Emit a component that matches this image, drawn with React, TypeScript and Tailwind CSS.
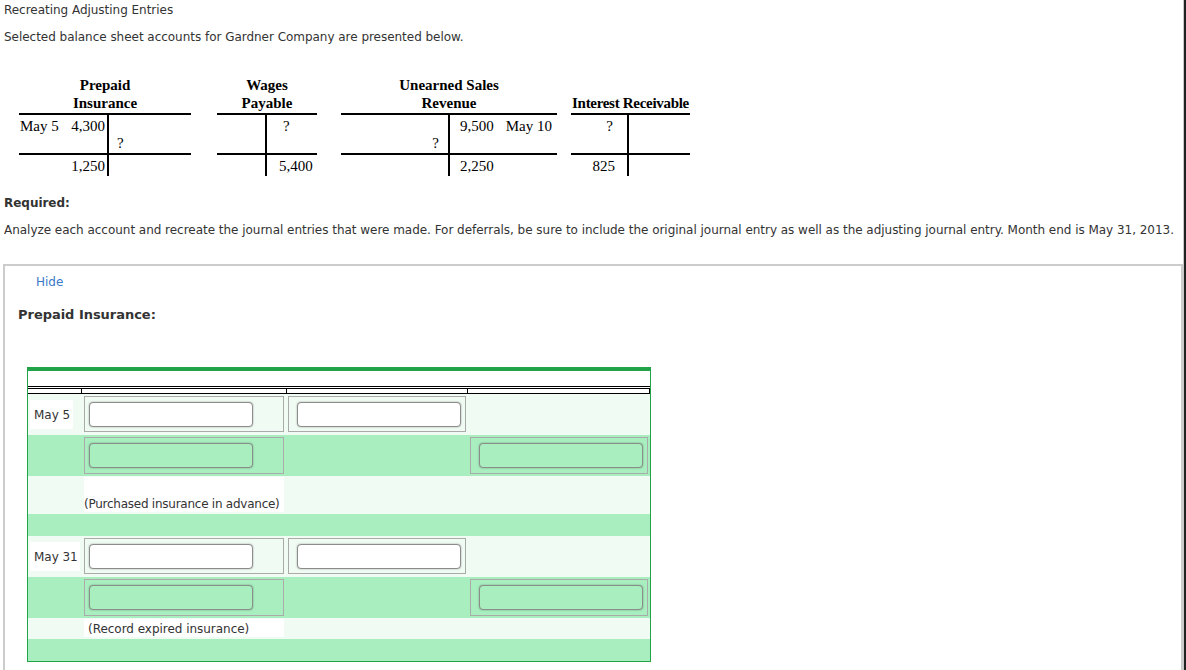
import React from "react";

type Cell = React.ReactNode;

function TAccount({
  w,
  lw,
  title,
  r1l,
  r1r,
  r2l,
  r2r,
  r3l,
  r3r,
}: {
  w: string;
  lw: string;
  title: React.ReactNode;
  r1l?: Cell;
  r1r?: Cell;
  r2l?: Cell;
  r2r?: Cell;
  r3l?: Cell;
  r3r?: Cell;
}) {
  return (
    <div className={`${w} shrink-0`}>
      <div className="h-[37px] flex flex-col justify-end items-center text-center font-bold leading-[18px] pb-[1px] whitespace-nowrap">
        {title}
      </div>
      <div className="border-t-2 border-black">
        <div className="flex">
          <div className={`${lw} shrink-0 border-r-2 border-black`}>
            <div className="h-[19px] leading-[22px]">{r1l}</div>
            <div className="h-[19px] leading-[19px]">{r2l}</div>
          </div>
          <div className="flex-1">
            <div className="h-[19px] leading-[22px]">{r1r}</div>
            <div className="h-[19px] leading-[19px]">{r2r}</div>
          </div>
        </div>
        <div className="flex border-t-2 border-black">
          <div className={`${lw} shrink-0 border-r-2 border-black h-[21px] leading-[23px]`}>{r3l}</div>
          <div className="flex-1 h-[21px] leading-[23px]">{r3r}</div>
        </div>
      </div>
    </div>
  );
}

function Input({ green }: { green?: boolean }) {
  return (
    <div
      className={`w-[164px] h-[25px] rounded-[4px] border border-[#8c8c8c] shadow-[0_0_2px_rgba(0,0,0,0.35)] ${
        green ? "bg-[#a8eebe]" : "bg-white"
      }`}
    />
  );
}

function DateRow({ date, dateW }: { date: string; dateW: string }) {
  return (
    <div className="flex h-[41px] bg-[#f0fbf3]">
      <div className="w-[54px] shrink-0 pl-[2px] pt-[6px]">
        <div className={`${dateW} h-[29px] bg-white pl-[4px] leading-[31px] whitespace-nowrap`}>{date}</div>
      </div>
      <div className="w-[205px] shrink-0 pl-[2px] pt-[2px]">
        <div className="w-[200px] h-[36px] border border-[#aaaaaa] pl-[4px] pt-[5px]">
          <Input />
        </div>
      </div>
      <div className="w-[181px] shrink-0 pl-[1px] pt-[2px]">
        <div className="w-[178px] h-[36px] border border-[#aaaaaa] flex justify-end pr-[4px] pt-[5px]">
          <Input />
        </div>
      </div>
      <div className="flex-1" />
    </div>
  );
}

function CreditRow() {
  return (
    <div className="flex h-[41px] bg-[#a8eebe]">
      <div className="w-[54px] shrink-0" />
      <div className="w-[205px] shrink-0 pl-[2px] pt-[2px]">
        <div className="w-[200px] h-[37px] border border-[#aaaaaa] pl-[4px] pt-[5px]">
          <Input green />
        </div>
      </div>
      <div className="w-[181px] shrink-0" />
      <div className="w-[182px] shrink-0 pl-[2px] pt-[2px]">
        <div className="w-[178px] h-[37px] border border-[#aaaaaa] flex justify-end pr-[4px] pt-[5px]">
          <Input green />
        </div>
      </div>
    </div>
  );
}

export default function App() {
  return (
    <div className="flex w-[1186px] min-h-[670px] bg-white text-[#333333] font-['DejaVu_Sans',Verdana,sans-serif] text-[12px] leading-[16px] tracking-[-0.03px] overflow-hidden">
      <div className="w-[1183px] shrink-0">
        <p className="mt-[2px] pl-[4px]">Recreating Adjusting Entries</p>
        <p className="mt-[11px] pl-[4px]">Selected balance sheet accounts for Gardner Company are presented below.</p>

        <div className="mt-[31px] pl-[19px] flex font-['Liberation_Serif',serif] text-[15px] text-black tracking-normal">
          <TAccount
            w="w-[172px]"
            lw="w-[90px]"
            title={
              <>
                <span>Prepaid</span>
                <span>Insurance</span>
              </>
            }
            r1l={
              <div className="flex justify-between pl-[1px] pr-[2px]">
                <span>May 5</span>
                <span>4,300</span>
              </div>
            }
            r2r={<div className="pl-[8px]">?</div>}
            r3l={<div className="text-right pr-[2px]">1,250</div>}
          />
          <div className="w-[26px] shrink-0" />
          <TAccount
            w="w-[100px]"
            lw="w-[50px]"
            title={
              <>
                <span>Wages</span>
                <span>Payable</span>
              </>
            }
            r1r={<div className="pl-[16px]">?</div>}
            r3r={<div className="pl-[12px]">5,400</div>}
          />
          <div className="w-[24px] shrink-0" />
          <TAccount
            w="w-[216px]"
            lw="w-[109px]"
            title={
              <>
                <span>Unearned Sales</span>
                <span>Revenue</span>
              </>
            }
            r1r={
              <div className="pl-[10px] flex">
                <span>9,500</span>
                <span className="ml-[12px]">May 10</span>
              </div>
            }
            r2l={<div className="text-right pr-[9px]">?</div>}
            r3r={<div className="pl-[10px]">2,250</div>}
          />
          <div className="w-[14px] shrink-0" />
          <TAccount
            w="w-[119px]"
            lw="w-[58px]"
            title={<span className="tracking-[-0.3px]">Interest Receivable</span>}
            r1l={<div className="text-right pr-[14px]">?</div>}
            r3l={<div className="text-right pr-[12px]">825</div>}
          />
        </div>

        <p className="mt-[19px] pl-[4px] font-bold">Required:</p>
        <p className="mt-[11px] pl-[4px] whitespace-nowrap">
          Analyze each account and recreate the journal entries that were made. For deferrals, be sure to include the original journal entry as well as the adjusting journal entry. Month end is May 31, 2013.
        </p>

        <div className="mt-[26px] ml-[3px] w-[1180px] h-[420px] border-2 border-[#cccccc]">
          <div className="pt-[8px] pl-[31px]">
            <span className="text-[#3a78c8]">Hide</span>
          </div>
          <p className="mt-[17px] pl-[13px] font-bold text-[13px]">Prepaid Insurance:</p>

          <div className="mt-[44px] ml-[22px] w-[624px]">
            <div className="h-[4px] bg-[#22a348]" />
            <div className="border-x border-b border-[#22a348]">
              <div className="h-[15px] bg-white" />
              <div className="border-t border-black" />
              <div className="h-px bg-white" />
              <div className="flex h-[6px] border-y border-r border-black">
                <div className="w-[54px] shrink-0 border-r border-black" />
                <div className="w-[205px] shrink-0 border-r border-black" />
                <div className="w-[181px] shrink-0 border-r border-black" />
                <div className="flex-1" />
              </div>

              <DateRow date="May 5" dateW="w-[43px]" />
              <CreditRow />
              <div className="flex h-[38px] bg-[#f0fbf3]">
                <div className="w-[54px] shrink-0" />
                <div className="w-[205px] shrink-0 pl-[2px] pt-[1px]">
                  <div className="w-[200px] h-[35px] bg-white flex items-end pb-0 whitespace-nowrap tracking-[-0.25px]">
                    (Purchased insurance in advance)
                  </div>
                </div>
              </div>
              <div className="h-[22px] bg-[#a8eebe]" />

              <DateRow date="May 31" dateW="w-[50px]" />
              <CreditRow />
              <div className="flex h-[21px] bg-[#f0fbf3]">
                <div className="w-[54px] shrink-0" />
                <div className="w-[205px] shrink-0 pl-[2px] pt-[1px]">
                  <div className="w-[200px] h-[18px] bg-white pl-[4px] leading-[20px] whitespace-nowrap">
                    (Record expired insurance)
                  </div>
                </div>
              </div>
              <div className="h-[22px] bg-[#a8eebe]" />
            </div>
          </div>
        </div>
      </div>
      <div className="w-px shrink-0 bg-[#c8c8c8]" />
      <div className="w-[2px] shrink-0 bg-[#222222]" />
    </div>
  );
}
